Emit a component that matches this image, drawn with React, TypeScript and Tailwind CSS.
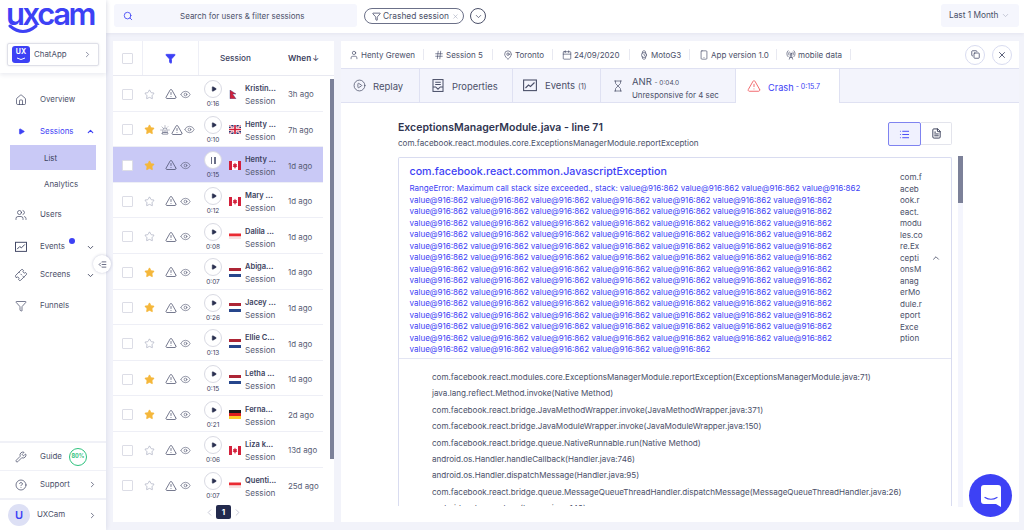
import React from 'react';
import {
  Home, Users, Ticket, Filter, Wrench, CircleHelp, ChevronRight, ChevronUp, ChevronDown, ChevronLeft, Play, Star,
  TriangleAlert, Eye, Siren, Search, User, Hash, MapPin, Calendar, Watch, Smartphone, RadioTower, Copy, X,
  CirclePlay, Hourglass, List, FileText, IndentDecrease,
} from 'lucide-react';

type FlagName = 'np' | 'uk' | 'ca' | 'sg' | 'nl' | 'de';

const sessions: { name: string; time: string; when: string; flag: FlagName; starred?: boolean; alarm?: boolean; active?: boolean }[] = [
  { name: 'Kristin...', time: '0:16', when: '3h ago', flag: 'np' },
  { name: 'Henty ...', time: '0:10', when: '7h ago', flag: 'uk', starred: true, alarm: true },
  { name: 'Henty ...', time: '0:15', when: '1d ago', flag: 'ca', starred: true, active: true },
  { name: 'Mary ...', time: '0:12', when: '1d ago', flag: 'ca' },
  { name: 'Dalila ...', time: '0:08', when: '1d ago', flag: 'sg' },
  { name: 'Abiga...', time: '0:07', when: '1d ago', flag: 'nl', starred: true },
  { name: 'Jacey ...', time: '0:26', when: '1d ago', flag: 'nl', starred: true },
  { name: 'Ellie C...', time: '0:13', when: '1d ago', flag: 'nl' },
  { name: 'Letha ...', time: '0:15', when: '1d ago', flag: 'nl', starred: true },
  { name: 'Ferna...', time: '0:21', when: '2d ago', flag: 'de', starred: true },
  { name: 'Liza k...', time: '0:06', when: '13d ago', flag: 'ca' },
  { name: 'Quenti...', time: '0:07', when: '25d ago', flag: 'sg' },
];

const stackLines = [
  'com.facebook.react.modules.core.ExceptionsManagerModule.reportException(ExceptionsManagerModule.java:71)',
  'java.lang.reflect.Method.invoke(Native Method)',
  'com.facebook.react.bridge.JavaMethodWrapper.invoke(JavaMethodWrapper.java:371)',
  'com.facebook.react.bridge.JavaModuleWrapper.invoke(JavaModuleWrapper.java:150)',
  'com.facebook.react.bridge.queue.NativeRunnable.run(Native Method)',
  'android.os.Handler.handleCallback(Handler.java:746)',
  'android.os.Handler.dispatchMessage(Handler.java:95)',
  'com.facebook.react.bridge.queue.MessageQueueThreadHandler.dispatchMessage(MessageQueueThreadHandler.java:26)',
  'android.os.Looper.loop(Looper.java:148)',
];

const wrappedModule = ['com.f', 'aceb', 'ook.r', 'eact.', 'modu', 'les.co', 're.Ex', 'cepti', 'onsM', 'anag', 'erMo', 'dule.r', 'eport', 'Exce', 'ption'];

const value = 'value@916:862';
const valueRow = Array(7).fill(value).join(' ');

const infoItems = [
  { icon: User, label: 'Henty Grewen', width: 'w-[83px] pl-[8px]' },
  { icon: Hash, label: 'Session 5', width: 'w-[69px] pl-[10px]' },
  { icon: MapPin, label: 'Toronto', width: 'w-[60px] pl-[10px]' },
  { icon: Calendar, label: '24/09/2020', width: 'w-[77px] pl-[9px]' },
  { icon: Watch, label: 'MotoG3', width: 'w-[60px] pl-[9px]' },
  { icon: Smartphone, label: 'App version 1.0', width: 'w-[87px] pl-[9px]' },
  { icon: RadioTower, label: 'mobile data', width: 'w-[74px] pl-[9px]' },
];

function Flag({ name }: { name: FlagName }) {
  return (
    <svg viewBox="0 0 12 9" className="h-[9px] w-[12px] shrink-0">
      {name === 'ca' && (
        <>
          <rect width="12" height="9" fill="#fff" />
          <rect width="3" height="9" fill="#d3203a" />
          <rect x="9" width="3" height="9" fill="#d3203a" />
          <path d="M6 1.6 6.8 3.2 8 3 7.6 4.8 8.4 5.2 6.3 6.8V7.8H5.7V6.8L3.6 5.2 4.4 4.8 4 3 5.2 3.2Z" fill="#d3203a" />
        </>
      )}
      {name === 'uk' && (
        <>
          <rect width="12" height="9" fill="#27306f" />
          <path d="M0 0 12 9M12 0 0 9" stroke="#fff" strokeWidth="1.8" />
          <path d="M0 0 12 9M12 0 0 9" stroke="#d3203a" strokeWidth=".6" />
          <path d="M6 0V9M0 4.5H12" stroke="#fff" strokeWidth="3" />
          <path d="M6 0V9M0 4.5H12" stroke="#d3203a" strokeWidth="1.7" />
        </>
      )}
      {name === 'np' && <path d="M1 0 7 4H3.6L7 8.8H1Z" fill="#d3203a" stroke="#2a3a80" strokeWidth=".4" />}
      {name === 'sg' && (
        <>
          <rect y="1.5" width="12" height="3" fill="#ea2b33" />
          <rect y="4.5" width="12" height="2.5" fill="#f8e3e3" />
        </>
      )}
      {name === 'nl' && (
        <>
          <rect width="12" height="3" fill="#ad2535" />
          <rect y="3" width="12" height="3" fill="#fff" />
          <rect y="6" width="12" height="3" fill="#26468c" />
        </>
      )}
      {name === 'de' && (
        <>
          <rect width="12" height="3" fill="#1a1a1a" />
          <rect y="3" width="12" height="3" fill="#dd1f1f" />
          <rect y="6" width="12" height="3" fill="#fbcc2a" />
        </>
      )}
    </svg>
  );
}

function ChartBox({ className }: { className?: string }) {
  return (
    <svg viewBox="0 0 14 13" fill="none" stroke="currentColor" strokeWidth="1.1" className={className}>
      <rect x=".6" y="1" width="12.8" height="10.6" />
      <path d="M2.5 9 5.5 6 7.5 7.5 11.5 3.5" />
    </svg>
  );
}

function DocTray({ className }: { className?: string }) {
  return (
    <svg viewBox="0 0 12 14" fill="none" stroke="currentColor" strokeWidth="1.1" className={className}>
      <rect x=".6" y=".6" width="10.8" height="12.8" />
      <path d="M3 3.5H9M3 6H9M.6 8.5H3.5L6 11 8.5 8.5H11.4" />
    </svg>
  );
}

function NavItem({ icon: Icon, label, className = '', iconClass = '', right }: { icon: React.ElementType; label: string; className?: string; iconClass?: string; right?: React.ReactNode }) {
  return (
    <div className={`flex h-[28px] items-center pl-[15px] pr-[11px] text-[#4b5069] ${className}`}>
      <Icon className={`h-[12px] w-[12px] shrink-0 text-[#3c4260] ${iconClass}`} strokeWidth={1.4} />
      <span className="ml-[13px] text-[7.9px]">{label}</span>
      <div className="ml-auto flex items-center">{right}</div>
    </div>
  );
}

function SessionRow({ row }: { row: (typeof sessions)[0] }) {
  return (
    <div className={`flex h-[35.6px] shrink-0 items-center border-b border-[#eeeff6] pt-[2px] ${row.active ? 'bg-[#c9c9f6]' : ''}`}>
      <div className="ml-[9px] h-[11px] w-[11px] shrink-0 rounded-[1px] border border-[#dcdde6] bg-white" />
      <Star
        className={`ml-[11px] h-[11px] w-[11px] shrink-0 ${row.starred ? 'fill-[#f5b73b] text-[#f5b73b]' : 'text-[#a6aabd]'}`}
        strokeWidth={1.5}
      />
      <div className="flex w-[45px] shrink-0 items-center justify-center gap-[1px] text-[#3c4260]">
        {row.alarm && <Siren className="h-[10px] w-[10px]" strokeWidth={1.3} />}
        <TriangleAlert className="h-[12px] w-[12px]" strokeWidth={1.4} />
        <Eye className={`h-[11px] w-[11px] ${row.alarm ? '' : 'ml-[2px]'} text-[#5c617a]`} strokeWidth={1.4} />
      </div>
      <div className="flex w-[26px] shrink-0 flex-col items-center pt-[1px]">
        <div className="flex h-[18px] w-[18px] items-center justify-center gap-[2px] rounded-full border border-[#d9dae3] bg-white">
          {row.active ? (
            <>
              <span className="h-[7px] w-[1.5px] bg-[#6b7088]" />
              <span className="h-[7px] w-[1.5px] bg-[#6b7088]" />
            </>
          ) : (
            <Play className="ml-[1px] h-[6px] w-[6px] fill-[#2a3050] text-[#2a3050]" />
          )}
        </div>
        <span className="mt-[2px] text-[6.5px] leading-[9px] text-[#3c4260]">{row.time}</span>
      </div>
      <div className="ml-[3px]">
        <Flag name={row.flag} />
      </div>
      <div className="ml-[4px] w-[43px] shrink-0 pt-[2px] leading-[12px]">
        <div className="whitespace-nowrap text-[7.5px] font-semibold text-[#3c4260]">{row.name}</div>
        <div className="text-[8.2px] text-[#585d75]">Session</div>
      </div>
      <div className="whitespace-nowrap pt-[2px] text-[7.9px] text-[#585d75]">{row.when}</div>
    </div>
  );
}

function Sidebar() {
  return (
    <aside className="relative z-10 flex w-[106px] shrink-0 flex-col bg-white shadow-[1px_0_4px_rgba(60,65,120,0.1)]">
      <div className="h-[73px] shrink-0 px-[7px] shadow-[0_2px_4px_rgba(60,65,120,0.1)]">
        <div className="relative h-[38px]">
          <span className="absolute left-[-1px] top-[1px] text-[31px] font-semibold leading-[26px] tracking-[-2.4px] text-[#3d41f5]">uxcam</span>
          <svg viewBox="0 0 30 10" className="absolute left-[1px] top-[24px] h-[10px] w-[30px]">
            <path d="M2 2Q15 13 28 2" fill="none" stroke="#3d41f5" strokeWidth="3" strokeLinecap="round" />
          </svg>
        </div>
        <div className="mt-[5px] flex h-[23px] w-[92px] items-center rounded-[2px] border border-[#dfe0e8] pl-[4px] pr-[6px] shadow-[0_0_2px_rgba(60,65,120,0.15)]">
          <div className="relative flex h-[17px] w-[18px] items-start justify-center rounded-[3px] bg-[#3d41f5] pt-[2px] text-[7px] font-bold leading-[8px] text-white">
            UX
            <svg viewBox="0 0 10 4" className="absolute bottom-[2px] left-[4px] h-[4px] w-[10px]">
              <path d="M1 1Q5 4 9 1" fill="none" stroke="#fff" strokeWidth="1" />
            </svg>
          </div>
          <span className="ml-[4px] text-[7.9px] text-[#4b5069]">ChatApp</span>
          <ChevronRight className="ml-auto h-[9px] w-[9px] text-[#6b7088]" />
        </div>
      </div>

      <nav className="mt-[11px] flex flex-col">
        <NavItem icon={Home} label="Overview" className="h-[32px]" />
        <div className="flex h-[29px] items-center pl-[18px] pr-[11px] pt-[2px] text-[#3d41f5]">
          <Play className="h-[7px] w-[7px] fill-[#3d41f5]" />
          <span className="ml-[15px] text-[7.9px]">Sessions</span>
          <ChevronUp className="ml-auto h-[9px] w-[9px]" strokeWidth={3} />
        </div>
        <div className="mx-[10px] flex h-[25px] items-center bg-[#c9c9f6] pl-[34px] pt-[2px] text-[7.9px] text-[#3c4260]">List</div>
        <div className="flex h-[28px] items-center pl-[44px] pt-[2px] text-[7.9px] text-[#4b5069]">Analytics</div>
        <NavItem icon={Users} label="Users" className="mt-[3px]" />
        <NavItem
          icon={ChartBox}
          label="Events"
          className="mt-[4px]"
          right={
            <>
              <span className="absolute left-[69px] top-[238px] h-[5.5px] w-[5.5px] rounded-full bg-[#3d41f5]" />
              <ChevronDown className="h-[9px] w-[9px] text-[#4b5069]" strokeWidth={2.5} />
            </>
          }
        />
        <NavItem icon={Ticket} iconClass="-rotate-45" label="Screens" right={<ChevronDown className="h-[9px] w-[9px] text-[#4b5069]" strokeWidth={2.5} />} />
        <NavItem icon={Filter} label="Funnels" className="mt-[3px]" />
      </nav>

      <div className="mt-auto flex flex-col">
        <div className="flex h-[29px] items-center border-t-2 border-[#f0f1f7] pl-[15px] text-[#4b5069]">
          <Wrench className="h-[12px] w-[12px] text-[#3c4260]" strokeWidth={1.4} />
          <span className="ml-[13px] text-[7.9px]">Guide</span>
          <div className="ml-[7px] flex h-[18px] w-[18px] items-center justify-center rounded-full border-[1.5px] border-[#2ec27e] text-[5.5px] font-bold text-[#2ec27e]">80%</div>
        </div>
        <div className="flex h-[28px] items-center border-t border-[#f0f1f7] pl-[15px] pr-[9px] text-[#4b5069]">
          <CircleHelp className="h-[12px] w-[12px] text-[#3c4260]" strokeWidth={1.4} />
          <span className="ml-[13px] text-[7.9px]">Support</span>
          <ChevronRight className="ml-auto h-[9px] w-[9px]" />
        </div>
        <div className="flex h-[32px] items-center border-t-2 border-[#f0f1f7] pl-[8px] pr-[9px] text-[#4b5069]">
          <div className="flex h-[22px] w-[22px] items-center justify-center rounded-full bg-[#dde0f5] text-[11px] font-semibold text-[#3d41f5]">U</div>
          <span className="ml-[7px] text-[7.9px]">UXCam</span>
          <ChevronRight className="ml-auto h-[9px] w-[9px]" />
        </div>
      </div>

      <button className="absolute left-[93px] top-[255px] flex h-[18px] w-[18px] items-center justify-center rounded-full bg-white shadow-[0_0_3px_rgba(60,65,120,0.3)]">
        <IndentDecrease className="h-[9px] w-[9px] text-[#3c4260]" />
      </button>
    </aside>
  );
}

function TopBar() {
  return (
    <header className="flex h-[33px] shrink-0 items-start bg-white pl-[8px] pr-[5px] pt-[4px] shadow-[0_1px_4px_rgba(60,65,120,0.08)]">
      <div className="flex h-[23px] w-[243px] items-center rounded-[3px] bg-[#f5f6fd] pl-[9px]">
        <Search className="h-[10px] w-[10px] text-[#3d41f5]" />
        <span className="ml-[47px] text-[8px] text-[#4b5069]">Search for users &amp; filter sessions</span>
      </div>
      <div className="ml-[7px] mt-[4px] flex h-[16px] w-[100px] items-center rounded-full border border-[#6b7088] pl-[7px]">
        <Filter className="h-[9px] w-[9px] text-[#3c4260]" />
        <span className="ml-[2px] text-[8.4px] text-[#4b5069]">Crashed session</span>
        <X className="ml-[3px] h-[7px] w-[7px] text-[#a6aabd]" />
      </div>
      <div className="ml-[6px] mt-[4px] flex h-[16px] w-[16px] items-center justify-center rounded-full border border-[#4b5069]">
        <ChevronDown className="h-[9px] w-[9px] text-[#4b5069]" />
      </div>
      <div className="ml-auto flex h-[23px] w-[78px] items-center rounded-[3px] bg-[#f5f6fd] pl-[8px]">
        <span className="text-[8.3px] text-[#4b5069]">Last 1 Month</span>
        <ChevronDown className="ml-[3px] h-[9px] w-[9px] text-[#b6b9c9]" />
      </div>
    </header>
  );
}

function SessionList() {
  return (
    <section className="flex w-[221px] shrink-0 flex-col bg-white">
      <div className="flex h-[35px] shrink-0 items-center border-b border-[#e8e9f1] text-[8.2px] font-medium text-[#3c4260]">
        <div className="flex h-full w-[30px] items-center justify-center border-r border-[#eeeff6]">
          <div className="h-[11px] w-[11px] rounded-[1px] border border-[#dcdde6]" />
        </div>
        <div className="flex h-full w-[56px] items-center justify-center border-r border-[#eeeff6]">
          <Filter className="h-[11px] w-[11px] fill-[#3d41f5] text-[#3d41f5]" />
        </div>
        <div className="w-[89px] pl-[21px]">Session</div>
        <div className="flex items-center font-semibold">
          When
          <span className="ml-[1px] font-normal">↓</span>
        </div>
      </div>
      <div className="flex h-[424px] overflow-hidden">
        <div className="flex w-[210px] flex-col">
          {sessions.map((row, idx) => (
            <SessionRow key={idx} row={row} />
          ))}
        </div>
        <div className="ml-[7px] mt-[3px] h-[380px] w-[4px] bg-[#7c8199]" />
      </div>
      <div className="flex flex-1 items-center justify-center pt-[2px]">
        <ChevronLeft className="h-[11px] w-[11px] text-[#c4c6d4]" />
        <div className="mx-[1px] flex h-[14px] w-[15px] items-center justify-center rounded-[2px] bg-[#232a4d] text-[8px] font-bold text-white">1</div>
        <ChevronRight className="h-[11px] w-[11px] text-[#c4c6d4]" />
      </div>
    </section>
  );
}

function ExceptionBox() {
  return (
    <div className="h-[349px] w-[554px] shrink-0 overflow-hidden rounded-t-[2px] border-x border-t border-[#d9dcf0]">
      <div className="relative flex h-[201px] border-b border-[#e3e5f3] pl-[10.5px] pt-[6px]">
        <div className="w-[490.5px] shrink-0 text-[8.02px] leading-[11.5px] text-[#3d41f5]">
          <div className="text-[10.7px] font-medium leading-[16px]">com.facebook.react.common.JavascriptException</div>
          <div className="mt-[3px] whitespace-nowrap">RangeError: Maximum call stack size exceeded., stack: {Array(4).fill(value).join(' ')}</div>
          {Array.from({ length: 13 }).map((_, idx) => (
            <div key={idx} className="whitespace-nowrap">{valueRow}</div>
          ))}
          <div className="whitespace-nowrap">{Array(5).fill(value).join(' ')}</div>
        </div>
        <div className="pt-[8px] text-[8.08px] leading-[11.5px] text-[#4b5069]">
          {wrappedModule.map(part => (
            <div key={part}>{part}</div>
          ))}
        </div>
        <ChevronUp className="absolute left-[532px] top-[95px] h-[10px] w-[10px] text-[#4b5069]" />
      </div>
      <div className="pl-[33px] pt-[10px]">
        {stackLines.map(line => (
          <div key={line} className="h-[16.4px] whitespace-nowrap text-[8.08px] leading-[16.4px] text-[#4b5069]">{line}</div>
        ))}
      </div>
    </div>
  );
}

function SessionDetail() {
  return (
    <section className="flex min-w-0 flex-1 flex-col overflow-hidden bg-white">
      <div className="flex h-[27px] shrink-0 items-center text-[8px] text-[#4b5069]">
        {infoItems.map(item => (
          <div key={item.label} className={`flex h-[11px] items-center whitespace-nowrap border-r border-[#e8e9f1] ${item.width}`}>
            <item.icon className="mr-[2px] h-[10px] w-[10px] shrink-0 text-[#3c4260]" strokeWidth={1.5} />
            {item.label}
          </div>
        ))}
        <div className="ml-auto flex items-center gap-[7px] pr-[7px]">
          <div className="flex h-[20px] w-[20px] items-center justify-center rounded-full border border-[#d9dcf0]">
            <Copy className="h-[9px] w-[9px] text-[#3c4260]" />
          </div>
          <div className="flex h-[20px] w-[20px] items-center justify-center rounded-full border border-[#d9dcf0]">
            <X className="h-[10px] w-[10px] text-[#3c4260]" />
          </div>
        </div>
      </div>

      <div className="flex h-[35px] shrink-0 border-y border-[#dfe1f2] bg-[#f3f4fc] text-[#4b5069]">
        <div className="flex w-[79px] items-center border-r border-[#dfe1f2] pl-[12px] text-[9.5px]">
          <CirclePlay className="h-[13px] w-[13px]" strokeWidth={1.4} />
          <span className="ml-[7px] pt-[3px]">Replay</span>
        </div>
        <div className="flex w-[93px] items-center border-r border-[#dfe1f2] pl-[12px] text-[9.4px]">
          <DocTray className="h-[13px] w-[12px]" />
          <span className="ml-[8px] pt-[3px]">Properties</span>
        </div>
        <div className="flex w-[88px] items-center border-r border-[#dfe1f2] pl-[10px] text-[9.5px]">
          <ChartBox className="h-[13px] w-[14px]" />
          <span className="ml-[8px] pt-[2px]">Events</span>
          <span className="ml-[3px] pt-[2px] text-[7.5px]">(1)</span>
        </div>
        <div className="flex w-[135px] items-center border-r border-[#dfe1f2] pl-[11px]">
          <Hourglass className="h-[12px] w-[12px]" strokeWidth={1.4} />
          <div className="ml-[8px] whitespace-nowrap pt-[5px] leading-[12px]">
            <div className="text-[9.5px]">ANR <span className="text-[6.5px]">- 0:04.0</span></div>
            <div className="text-[7.9px]">Unresponsive for 4 sec</div>
          </div>
        </div>
        <div className="mb-[-1px] flex w-[104px] items-center border-r border-[#dfe1f2] bg-white pl-[11px] text-[#3d41f5]">
          <TriangleAlert className="h-[14px] w-[14px] text-[#f0565b]" strokeWidth={1.5} />
          <span className="ml-[7px] pt-[3px] text-[9.2px]">Crash</span>
          <span className="ml-[2px] pt-[3px] text-[7px]">- 0:15.7</span>
        </div>
      </div>

      <div className="flex min-h-0 flex-1 pl-[57px] pt-[18px]">
        <div className="flex w-[554px] shrink-0 flex-col">
          <div className="flex h-[36px] shrink-0">
            <div>
              <div className="text-[10.5px] font-semibold leading-[13px] text-[#2f3450]">ExceptionsManagerModule.java - line 71</div>
              <div className="mt-[3px] whitespace-nowrap text-[8.08px] leading-[12px] text-[#4b5069]">com.facebook.react.modules.core.ExceptionsManagerModule.reportException</div>
            </div>
            <div className="ml-auto mt-[1px] flex items-start">
              <div className="flex h-[24px] w-[33px] items-center justify-center rounded-[2px] border border-[#7f83f0] bg-[#f0f1fe]">
                <List className="h-[11px] w-[11px] text-[#3d41f5]" />
              </div>
              <div className="flex h-[23px] w-[31px] items-center justify-center rounded-r-[2px] border border-l-0 border-[#e3e4ec]">
                <FileText className="h-[11px] w-[11px] text-[#2f3450]" />
              </div>
            </div>
          </div>
          <ExceptionBox />
        </div>
        <div className="ml-[6px] mt-[35px] flex h-[351px] w-[5px] flex-col bg-[#f4f5fd]">
          <div className="h-[47px] bg-[#7c8199]" />
        </div>
      </div>
    </section>
  );
}

export default function App() {
  return (
    <div className="relative flex h-[530px] w-[1024px] overflow-hidden bg-[#f2f3fa] font-['Inter','Liberation_Sans',sans-serif]">
      <Sidebar />
      <main className="flex min-w-0 flex-1 flex-col">
        <TopBar />
        <div className="flex min-h-0 flex-1 gap-[7px] pb-[8px] pl-[7px] pr-[5px] pt-[8px]">
          <SessionList />
          <SessionDetail />
        </div>
      </main>
      <button className="absolute left-[969px] top-[474px] flex h-[43px] w-[43px] items-center justify-center rounded-full bg-[#3d41f5]">
        <svg viewBox="0 0 20 22" className="h-[22px] w-[20px]">
          <path d="M3 0H17A3 3 0 0 1 20 3V22L15 19H3A3 3 0 0 1 0 16V3A3 3 0 0 1 3 0Z" fill="#fff" />
          <path d="M4 12.5Q10 16 16 12.5" fill="none" stroke="#3d41f5" strokeWidth="1.2" strokeLinecap="round" />
        </svg>
      </button>
    </div>
  );
}
